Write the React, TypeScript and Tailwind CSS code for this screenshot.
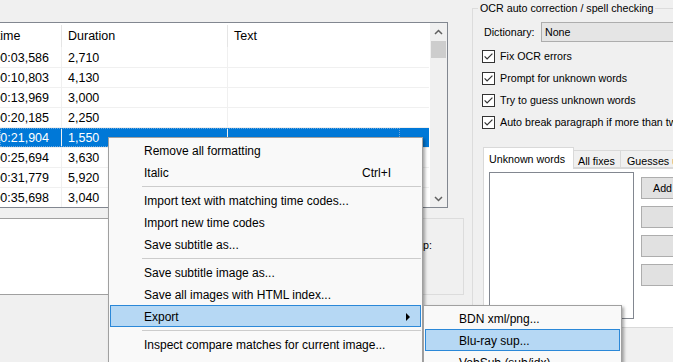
import React from "react"

const rows = [
  ["00:00:03,586", "2,710"],
  ["00:00:10,803", "4,130"],
  ["00:00:13,969", "3,000"],
  ["00:00:20,185", "2,250"],
  ["00:00:21,904", "1,550"],
  ["00:00:25,694", "3,630"],
  ["00:00:31,779", "5,920"],
  ["00:00:35,698", "3,040"],
]

const checks = [
  "Fix OCR errors",
  "Prompt for unknown words",
  "Try to guess unknown words",
  "Auto break paragraph if more than two lines",
]

type MenuEntry = { label?: string; shortcut?: string; sep?: boolean; active?: boolean; sub?: boolean }

const mainMenu: MenuEntry[] = [
  { label: "Remove all formatting" },
  { label: "Italic", shortcut: "Ctrl+I" },
  { sep: true },
  { label: "Import text with matching time codes..." },
  { label: "Import new time codes" },
  { label: "Save subtitle as..." },
  { sep: true },
  { label: "Save subtitle image as..." },
  { label: "Save all images with HTML index..." },
  { label: "Export", active: true, sub: true },
  { sep: true },
  { label: "Inspect compare matches for current image..." },
  { label: "OCR selected lines...", shortcut: "Ctrl+T" },
]

const subMenu: MenuEntry[] = [
  { label: "BDN xml/png..." },
  { label: "Blu-ray sup...", active: true },
  { label: "VobSub (sub/idx)..." },
]

function CheckBox() {
  return (
    <svg width="13" height="13" viewBox="0 0 13 13" className="shrink-0">
      <rect x="0.5" y="0.5" width="12" height="12" fill="white" stroke="#333333" />
      <path d="M2.6 6.4 L5.1 8.9 L10.4 3.6" fill="none" stroke="#333333" strokeWidth="1.2" />
    </svg>
  )
}

function Menu({ items, className }: { items: MenuEntry[]; className: string }) {
  return (
    <div
      className={
        "absolute flex flex-col p-[1px] border border-[#a0a0a0] bg-[#f9f9f9] text-[12px] text-black shadow-[2px_2px_3px_rgba(0,0,0,0.35)] " +
        className
      }
    >
      {items.map((it, i) =>
        it.sep ? (
          <div key={i} className="h-[6px] flex items-center pl-[32px]">
            <div className="h-px flex-1 bg-[#cccccc]" />
          </div>
        ) : (
          <div
            key={i}
            className={
              "h-[22px] flex items-center pl-[33px] pt-px border whitespace-nowrap " +
              (it.active ? "border-[#2b88d8] bg-[#b6d8f4]" : "border-transparent")
            }
          >
            <span className="flex-1">{it.label}</span>
            {it.shortcut && <span className="w-[58px]">{it.shortcut}</span>}
            {it.sub && (
              <svg width="5" height="8" viewBox="0 0 5 8" className="mr-[9px]">
                <path d="M0 0 L4 4 L0 8 Z" fill="#000" />
              </svg>
            )}
          </div>
        )
      )}
    </div>
  )
}

export default function App() {
  return (
    <div className="relative w-[673px] h-[362px] overflow-hidden bg-[#f0f0f0] font-['Liberation_Sans',Arial,sans-serif] text-black flex">
      {/* left side: subtitle list + image area */}
      <div className="w-[464px] shrink-0 flex flex-col">
        <div className="mt-[22px] w-[448px] h-[186px] flex border-t border-r border-b border-[#828790] bg-white">
          <div className="w-[430px] overflow-hidden text-[12.5px]">
            <div className="-ml-[30px] w-[459px]">
              <div className="h-[24px] flex pt-[2px]">
                <div className="w-[92px] border-r border-[#e5e5e5] pl-[1px] flex items-center whitespace-nowrap">End time</div>
                <div className="w-[166px] border-r border-[#e5e5e5] pl-[6px] flex items-center">Duration</div>
                <div className="w-[201px] pl-[6px] flex items-center">Text</div>
              </div>
              {rows.map((r, i) => {
                const sel = i === 4
                return (
                  <div
                    key={i}
                    className={
                      "relative h-[20px] flex " +
                      (i > 0 ? "border-t border-[#f0f0f0] " : "") +
                      (sel ? "bg-[#0078d7] text-white" : "")
                    }
                  >
                    <div className="w-[92px] border-r border-[#f0f0f0] pl-[6px] pt-[2px] flex items-center whitespace-nowrap">{r[0]}</div>
                    <div className="w-[166px] border-r border-[#f0f0f0] pl-[6px] pt-[2px] flex items-center">{r[1]}</div>
                    <div className="w-[201px]" />
                    {sel && <div className="absolute left-[30px] right-[29px] top-0 bottom-0 border border-dotted border-[#6aa8e0]" />}
                  </div>
                )
              })}
            </div>
          </div>
          <div className="w-[17px] flex flex-col bg-[#f0f0f0]">
            <div className="h-[17px] flex items-center justify-center">
              <svg width="9" height="6" viewBox="0 0 9 6">
                <path d="M1 5 L4.5 1.5 L8 5" fill="none" stroke="#606060" strokeWidth="1.5" />
              </svg>
            </div>
            <div className="mt-[1px] mx-[1px] h-[17px] bg-[#cdcdcd]" />
            <div className="flex-1" />
            <div className="h-[17px] flex items-center justify-center">
              <svg width="9" height="6" viewBox="0 0 9 6">
                <path d="M1 1 L4.5 4.5 L8 1" fill="none" stroke="#606060" strokeWidth="1.5" />
              </svg>
            </div>
          </div>
        </div>

        <div className="mt-[10px] h-[77px] flex">
          <div className="w-[330px] border-y border-r border-[#a0a0a0] bg-white" />
          <div className="ml-[10px] flex-1 border border-[#dcdcdc] flex justify-end pr-[31px] pt-[19px] text-[10.7px] leading-[14px]">
            <span>Group:</span>
          </div>
        </div>
      </div>

      {/* right side: OCR auto correction */}
      <div className="ml-[8px] mt-[8px] relative w-[260px] h-[400px] shrink-0 border border-[#dcdcdc] text-[10.7px]">
        <div className="absolute -top-[8px] left-[5px] px-[2px] bg-[#f0f0f0] leading-[15px] whitespace-nowrap">
          OCR auto correction / spell checking
        </div>

        <div className="mt-[13px] pl-[11px] flex items-center h-[20px]">
          <span className="w-[60px]">Dictionary:</span>
          <div className="w-[200px] h-[20px] border border-[#adadad] bg-[#e5e5e5] pl-[3px] flex items-center">None</div>
        </div>

        <div className="mt-[3px] flex flex-col">
          {checks.map((c) => (
            <div key={c} className="h-[22px] pl-[9px] flex items-center gap-[5px] whitespace-nowrap">
              <CheckBox />
              <span>{c}</span>
            </div>
          ))}
        </div>

        <div className="mt-[14px] ml-[10px]">
          <div className="h-[21px] flex items-start">
            <div className="relative z-10 h-[22px] w-[91px] shrink-0 border border-b-0 border-[#d9d9d9] bg-white pl-[5px] pt-[3px] whitespace-nowrap">
              Unknown words
            </div>
            <div className="-ml-px mt-[3px] h-[18px] w-[48px] shrink-0 border border-[#d9d9d9] pl-[4px] pt-[2px] whitespace-nowrap">
              All fixes
            </div>
            <div className="-ml-px mt-[3px] h-[18px] w-[90px] shrink-0 border border-[#d9d9d9] pl-[6px] pt-[2px] whitespace-nowrap">
              Guesses used
            </div>
          </div>
          <div className="w-[300px] h-[160px] border border-[#d9d9d9] bg-white flex">
            <div className="ml-[5px] mt-[3px] w-[145px] h-[147px] shrink-0 border border-[#828790] bg-white" />
            <div className="ml-[7px] mt-[8px] flex flex-col gap-[7px] shrink-0">
              <div className="w-[130px] h-[22px] border border-[#adadad] bg-[#e1e1e1] pl-[11px] flex items-center whitespace-nowrap">
                Add to names list
              </div>
              <div className="w-[130px] h-[22px] border border-[#adadad] bg-[#e1e1e1] pl-[45px] flex items-center whitespace-nowrap">Use once</div>
              <div className="w-[130px] h-[22px] border border-[#adadad] bg-[#e1e1e1] pl-[45px] flex items-center whitespace-nowrap">Change all</div>
              <div className="w-[130px] h-[22px] border border-[#adadad] bg-[#e1e1e1] pl-[45px] flex items-center whitespace-nowrap">Skip once</div>
            </div>
          </div>
        </div>
      </div>

      {/* context menu + export sub menu */}
      <Menu items={mainMenu} className="left-[108px] top-[137px] w-[315px]" />
      <Menu items={subMenu} className="left-[423px] top-[305px] w-[199px]" />
    </div>
  )
}
